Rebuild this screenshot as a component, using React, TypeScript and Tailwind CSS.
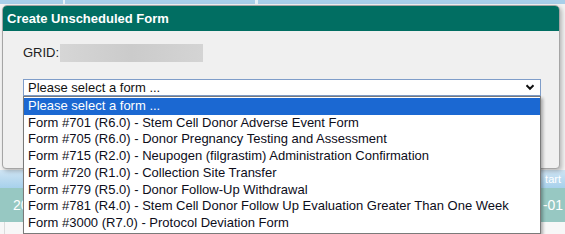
import React from "react";

const forms = [
  "Form #701 (R6.0) - Stem Cell Donor Adverse Event Form",
  "Form #705 (R6.0) - Donor Pregnancy Testing and Assessment",
  "Form #715 (R2.0) - Neupogen (filgrastim) Administration Confirmation",
  "Form #720 (R1.0) - Collection Site Transfer",
  "Form #779 (R5.0) - Donor Follow-Up Withdrawal",
  "Form #781 (R4.0) - Stem Cell Donor Follow Up Evaluation Greater Than One Week",
  "Form #3000 (R7.0) - Protocol Deviation Form",
];

function Chevron() {
  return (
    <svg width="10" height="7" viewBox="0 0 10 7" className="shrink-0">
      <path d="M1.5 1.2 L5 4.8 L8.5 1.2" fill="none" stroke="#111" strokeWidth="2" />
    </svg>
  );
}

export default function App() {
  return (
    <div className="relative h-[234px] w-[565px] overflow-hidden bg-[#f3f3f3] font-['Liberation_Sans',Arial,sans-serif]">
      {/* page behind the dialog */}
      <div className="flex h-full flex-col">
        <div className="flex h-[4px]">
          <div className="w-[63px] bg-[#a9cfe9]" />
          <div className="w-[2px] bg-[#e6f1f9]" />
          <div className="w-[190px] bg-[#a9cfe9]" />
          <div className="w-[3px] bg-[#e6f1f9]" />
          <div className="flex-1 bg-[#a9cfe9]" />
        </div>
        <div className="h-[166px] bg-[#f3f3f3]" />
        <div className="flex h-[18px] items-center justify-end bg-gradient-to-b from-[#cfe4f3] to-[#a7d1ec] pr-[4px] text-[11px] text-white">
          tart
        </div>
        <div className="flex h-[34px] items-center justify-between bg-[#97c8c2] px-[13px] pr-[2px] text-[14px] text-white">
          <span>20</span>
          <span>-01</span>
        </div>
        <div className="flex flex-1 bg-[#f7f7f7]">
          <div className="w-[5px] border-r border-[#dcdcdc]" />
        </div>
      </div>

      {/* dialog */}
      <div className="absolute left-[2px] top-[5px] flex h-[164px] w-[558px] flex-col overflow-hidden rounded-t-[5px] rounded-b-[4px] border border-[#a5a5a5] bg-[#f0f0f0] shadow-[2px_2px_4px_rgba(0,0,0,0.25)]">
        <div className="flex h-[25px] shrink-0 items-center bg-[#016e62] pl-[4px] text-[13px] font-bold text-white">
          Create Unscheduled Form
        </div>
        <div className="flex flex-col pl-[20px] pt-[13px]">
          <div className="flex h-[18px] items-center text-[13px] text-[#222]">
            <span className="w-[37px]">GRID:</span>
            <div className="h-[18px] w-[143px] bg-gradient-to-r from-[#d6d6d6] via-[#cbcbcb] to-[#d4d4d4]" />
          </div>
          <div className="mt-[17px] flex h-[17px] w-[518px] items-center justify-between border border-[#7f9dc9] bg-white pl-[4px] pr-[5px] text-[13px] text-[#111]">
            <span>Please select a form ...</span>
            <Chevron />
          </div>
        </div>
      </div>

      {/* open dropdown list */}
      <div className="absolute left-[23px] top-[96px] w-[518px] border border-[#7a7a7a] bg-white py-px text-[13px] leading-[16.7px] text-[#0d0d1a] shadow-[2px_2px_3px_rgba(0,0,0,0.3)]">
        <div className="bg-[#1b68d2] pl-[4px] text-white">Please select a form ...</div>
        {forms.map((f) => (
          <div key={f} className="whitespace-nowrap pl-[4px]">
            {f}
          </div>
        ))}
      </div>
    </div>
  );
}
